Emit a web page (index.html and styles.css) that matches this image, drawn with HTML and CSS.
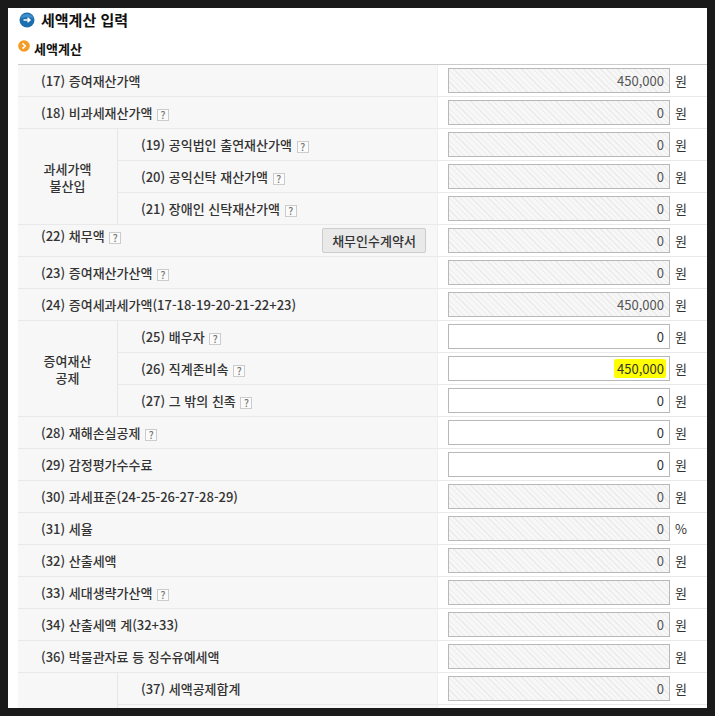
FILE: index.html
```html
<!DOCTYPE html>
<html lang="ko">
<head>
<meta charset="utf-8">
<title>세액계산 입력</title>
<link rel="stylesheet" href="styles.css">
</head>
<body>
<main class="page">
  <h1 class="title">
    <svg class="bullet-blue" viewBox="0 0 16 16" width="16" height="16"><circle cx="8" cy="8" r="7.5" fill="#1c6fae"/><path d="M1.5 6.5A7 7 0 0 1 14.500 6.500Q8 3.500 1.500 6.500Z" fill="#3f8fca"/><path d="M4.500 8H11M8.500 5.700L11 8L8.500 10.300" fill="none" stroke="#fff" stroke-width="1.500"/></svg>
    <span>세액계산 입력</span>
  </h1>
  <h2 class="subtitle">
    <svg class="bullet-orange" viewBox="0 0 12 12" width="12" height="12"><circle cx="6" cy="6" r="5.800" fill="#f59a23"/><path d="M4.500 3.300L7.300 6L4.500 8.700" fill="none" stroke="#fff" stroke-width="1.600"/></svg>
    <span>세액계산</span>
  </h2>
  <table class="tax">
    <colgroup><col class="c-group"><col class="c-label"><col class="c-value"></colgroup>
    <tbody>
      <tr><th colspan="2" class="label">(17) 증여재산가액</th><td class="value"><div class="wrap"><div class="field locked">450,000</div><span class="unit">원</span></div></td></tr>
      <tr><th colspan="2" class="label">(18) 비과세재산가액 <span class="help">?</span></th><td class="value"><div class="wrap"><div class="field locked">0</div><span class="unit">원</span></div></td></tr>
      <tr><th rowspan="3" class="group">과세가액<br>불산입</th><th class="label sub">(19) 공익법인 출연재산가액 <span class="help">?</span></th><td class="value"><div class="wrap"><div class="field locked">0</div><span class="unit">원</span></div></td></tr>
      <tr><th class="label sub">(20) 공익신탁 재산가액 <span class="help">?</span></th><td class="value"><div class="wrap"><div class="field locked">0</div><span class="unit">원</span></div></td></tr>
      <tr><th class="label sub">(21) 장애인 신탁재산가액 <span class="help">?</span></th><td class="value"><div class="wrap"><div class="field locked">0</div><span class="unit">원</span></div></td></tr>
      <tr><th colspan="2" class="label"><div class="split"><span class="raised">(22) 채무액 <span class="help">?</span></span><button class="btn" type="button">채무인수계약서</button></div></th><td class="value"><div class="wrap"><div class="field locked">0</div><span class="unit">원</span></div></td></tr>
      <tr><th colspan="2" class="label">(23) 증여재산가산액 <span class="help">?</span></th><td class="value"><div class="wrap"><div class="field locked">0</div><span class="unit">원</span></div></td></tr>
      <tr><th colspan="2" class="label">(24) 증여세과세가액(17-18-19-20-21-22+23)</th><td class="value"><div class="wrap"><div class="field locked">450,000</div><span class="unit">원</span></div></td></tr>
      <tr><th rowspan="3" class="group">증여재산<br>공제</th><th class="label sub">(25) 배우자 <span class="help">?</span></th><td class="value"><div class="wrap"><div class="field">0</div><span class="unit">원</span></div></td></tr>
      <tr><th class="label sub">(26) 직계존비속 <span class="help">?</span></th><td class="value"><div class="wrap"><div class="field"><mark class="marker">450,000</mark></div><span class="unit">원</span></div></td></tr>
      <tr><th class="label sub">(27) 그 밖의 친족 <span class="help">?</span></th><td class="value"><div class="wrap"><div class="field">0</div><span class="unit">원</span></div></td></tr>
      <tr><th colspan="2" class="label">(28) 재해손실공제 <span class="help">?</span></th><td class="value"><div class="wrap"><div class="field">0</div><span class="unit">원</span></div></td></tr>
      <tr><th colspan="2" class="label">(29) 감정평가수수료</th><td class="value"><div class="wrap"><div class="field">0</div><span class="unit">원</span></div></td></tr>
      <tr><th colspan="2" class="label">(30) 과세표준(24-25-26-27-28-29)</th><td class="value"><div class="wrap"><div class="field locked">0</div><span class="unit">원</span></div></td></tr>
      <tr><th colspan="2" class="label">(31) 세율</th><td class="value"><div class="wrap"><div class="field locked">0</div><span class="unit">%</span></div></td></tr>
      <tr><th colspan="2" class="label">(32) 산출세액</th><td class="value"><div class="wrap"><div class="field locked">0</div><span class="unit">원</span></div></td></tr>
      <tr><th colspan="2" class="label">(33) 세대생략가산액 <span class="help">?</span></th><td class="value"><div class="wrap"><div class="field locked"></div><span class="unit">원</span></div></td></tr>
      <tr><th colspan="2" class="label">(34) 산출세액 계(32+33)</th><td class="value"><div class="wrap"><div class="field locked">0</div><span class="unit">원</span></div></td></tr>
      <tr><th colspan="2" class="label">(36) 박물관자료 등 징수유예세액</th><td class="value"><div class="wrap"><div class="field locked"></div><span class="unit">원</span></div></td></tr>
      <tr><th rowspan="2" class="group"></th><th class="label sub">(37) 세액공제합계</th><td class="value"><div class="wrap"><div class="field locked">0</div><span class="unit">원</span></div></td></tr>
      <tr><th class="label sub"></th><td class="value"><div class="wrap"><div class="field locked"></div></div></td></tr>
    </tbody>
  </table>
</main>
</body>
</html>
```
FILE: styles.css
```css
* { box-sizing: border-box; }
html, body { margin: 0; height: 100%; overflow: hidden; }
body {
  background: #1a1a1a;
  padding: 8px;
  font-family: "Noto Sans CJK KR", "Noto Sans", sans-serif;
  font-size: 13px;
  font-weight: 500;
  color: #333;
}
.page {
  background: #fff;
  height: 700px;
  overflow: hidden;
  padding-left: 10px;
}
.title {
  display: flex;
  align-items: center;
  gap: 6px;
  height: 23px;
  margin: 0 0 0 1px;
  font-size: 15px;
  font-weight: 700;
  color: #111;
}
.subtitle {
  display: flex;
  align-items: center;
  gap: 4px;
  height: 32px;
  margin: 1px 0 0;
  font-size: 13px;
  font-weight: 700;
  color: #111;
}
.subtitle svg { margin-bottom: 4px; }
.tax {
  width: 689px;
  table-layout: fixed;
  border-collapse: separate;
  border-spacing: 0;
  border-top: 1px solid #ccc;
}
.c-group { width: 100px; }
.c-label { width: 320px; }
.c-value { width: 269px; }
.tax tr { height: 32px; }
.tax th, .tax td { padding: 0; border-bottom: 1px solid #e9e9e9; font-weight: 500; }
.label {
  background: #f7f7f7;
  border-right: 1px solid #eee;
  padding: 0 11px 0 23px !important;
  text-align: left;
  line-height: 16px;
  white-space: nowrap;
}
.group {
  background: #f7f7f7;
  border-right: 1px solid #e6e6e6;
  text-align: center;
  line-height: 17px;
}
.help {
  display: inline-block;
  width: 12px;
  height: 12px;
  margin-left: 1px;
  border: 1px solid #ccc;
  background: #fbfbfb;
  color: #777;
  font-size: 10px;
  line-height: 10px;
  text-align: center;
  vertical-align: -1px;
}
.split { display: flex; align-items: center; justify-content: space-between; }
.raised { margin-top: -9px; }
.btn {
  width: 104px;
  height: 25px;
  padding: 0;
  border: 1px solid #ccc;
  border-radius: 2px;
  background: #e9e9e9;
  color: #333;
  font: inherit;
  line-height: 23px;
}
.value { background: #fff; padding: 0 0 0 10px !important; }
.wrap { display: flex; align-items: center; gap: 5px; }
.field {
  width: 222px;
  height: 25px;
  flex: none;
  border: 1px solid #b8b8b8;
  background: #fff;
  padding-right: 5px;
  text-align: right;
  line-height: 23px;
  font-weight: 400;
  color: #333;
}
.locked {
  background: repeating-linear-gradient(45deg, #f7f7f7 0 3px, #ebebeb 3px 4px);
  color: #555;
}
.marker {
  display: inline-block;
  height: 19px;
  padding: 0 2px 0 3px;
  margin-right: -2px;
  background: #ff0;
  border-radius: 2px;
  line-height: 19px;
  color: #333;
}
.unit { color: #333; font-weight: 400; }
```
